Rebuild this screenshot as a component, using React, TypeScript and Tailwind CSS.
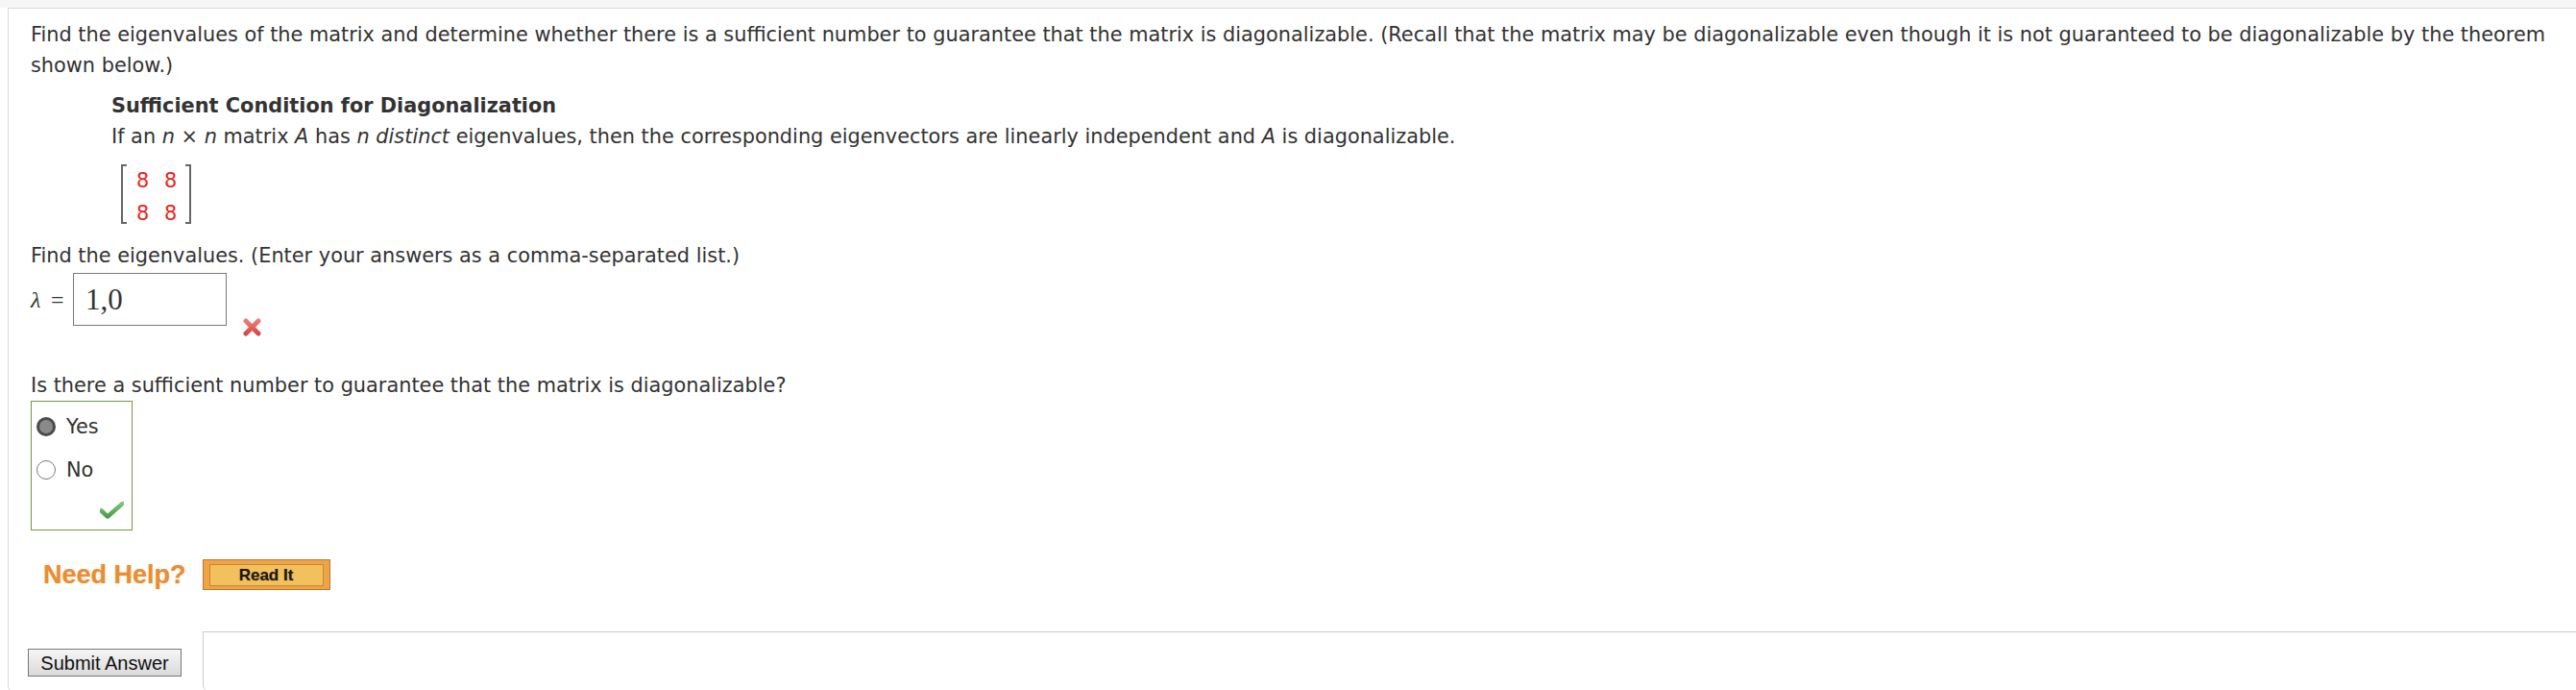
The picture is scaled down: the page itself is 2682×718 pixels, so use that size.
import React from "react";

function RedX() {
  return (
    <svg width="21" height="21" viewBox="0 0 21 21">
      <defs>
        <linearGradient id="rx" x1="0" y1="0" x2="0" y2="1">
          <stop offset="0" stopColor="#f07a7a" />
          <stop offset="1" stopColor="#d84848" />
        </linearGradient>
      </defs>
      <path d="M4 4 L17 17 M17 4 L4 17" stroke="url(#rx)" strokeWidth="5" strokeLinecap="round" fill="none" />
    </svg>
  );
}

function Check() {
  return (
    <svg width="25" height="18" viewBox="0 0 25 18">
      <defs>
        <linearGradient id="gc" x1="0" y1="0" x2="0" y2="1">
          <stop offset="0" stopColor="#7cc77c" />
          <stop offset="1" stopColor="#4a9e4a" />
        </linearGradient>
      </defs>
      <path d="M1.5 9.5 L8 15.5 L23.5 2" stroke="url(#gc)" strokeWidth="4.5" strokeLinecap="round" strokeLinejoin="round" fill="none" />
    </svg>
  );
}

export default function App() {
  return (
    <div className="h-[718px] overflow-hidden bg-white text-[#333] font-['DejaVu_Sans',Verdana,sans-serif] text-[20.85px] leading-[32px]">
      <div className="h-[8px] bg-[#f6f6f6]" />
      <div className="ml-[8px] h-[712px] border-l border-t border-b border-[#dcdcdc] rounded-bl-[6px] pl-[23px] pt-[11px]">
        <p className="whitespace-nowrap">
          Find the eigenvalues of the matrix and determine whether there is a sufficient number to guarantee that the matrix is diagonalizable. (Recall that the matrix may be diagonalizable even though it is not guaranteed to be diagonalizable by the theorem
          <br />
          shown below.)
        </p>
        <div className="ml-[84px] mt-[10px]">
          <div className="font-bold">Sufficient Condition for Diagonalization</div>
          <div>
            If an <i>n</i> × <i>n</i> matrix <i>A</i> has <i>n</i> <i>distinct</i> eigenvalues, then the corresponding eigenvectors are linearly independent and <i>A</i> is diagonalizable.
          </div>
          <div className="mt-[13px] ml-[10px] flex h-[62px]">
            <div className="w-[6px] h-[62px] border-l-2 border-t-2 border-b-2 border-[#666]" />
            <div className="grid grid-cols-[13px_13px] gap-x-[16px] pl-[10px] pr-[9px] leading-[34px] text-[#e8251c]">
              <span>8</span>
              <span>8</span>
              <span>8</span>
              <span>8</span>
            </div>
            <div className="w-[6px] h-[62px] border-r-2 border-t-2 border-b-2 border-[#666]" />
          </div>
        </div>
        <div className="mt-[17px]">Find the eigenvalues. (Enter your answers as a comma-separated list.)</div>
        <div className="mt-[2px] flex items-start">
          <div className="flex items-center h-[55px] font-['Liberation_Serif',serif] text-[24px]">
            <span className="italic w-[21px]">λ</span>
            <span className="w-[23px]">=</span>
          </div>
          <div className="w-[160px] h-[55px] border border-[#7a7a7a] flex items-center pl-[12px] font-['Liberation_Serif',serif] text-[31px] leading-none">
            1,0
          </div>
          <div className="ml-[16px] mt-[46px]">
            <RedX />
          </div>
        </div>
        <div className="mt-[34px]">Is there a sufficient number to guarantee that the matrix is diagonalizable?</div>
        <div className="w-[106px] h-[135px] border border-[#6a9e3c] pt-[8px] relative">
          <label className="flex items-center h-[36px] pl-[5px]">
            <span className="w-[20px] h-[20px] rounded-full border-[3px] border-[#4a4a4a] bg-[#8a8a8a]" />
            <span className="ml-[11px]">Yes</span>
          </label>
          <label className="flex items-center h-[36px] mt-[9px] pl-[5px]">
            <span className="w-[20px] h-[20px] rounded-full border-[1.5px] border-[#7a7a7a] bg-white" />
            <span className="ml-[11px]">No</span>
          </label>
          <div className="absolute left-[71px] top-[104px]">
            <Check />
          </div>
        </div>
        <div className="mt-[30px] flex items-start">
          <span className="ml-[13px] font-['Liberation_Sans',Arial,sans-serif] font-bold text-[27px] leading-[32px] text-[#ea8d33] [text-shadow:0_0_1px_rgba(233,138,44,0.6)]">
            Need Help?
          </span>
          <div className="ml-[17px] w-[133px] h-[32px] border border-[#b7792f] bg-[#eea444] p-[4px_6px_3px_6px]">
            <div className="h-full border border-[#c8863a] bg-[#f2c05c] flex items-center justify-center font-['Liberation_Sans',Arial,sans-serif] font-bold text-[17px] leading-none text-[#1a1a1a] [text-shadow:0_0_1px_rgba(0,0,0,0.4)]">
              Read It
            </div>
          </div>
        </div>
        <div className="mt-[43px] flex items-start">
          <button className="-ml-[3px] mt-[18px] w-[160px] h-[29px] border border-[#777] bg-gradient-to-b from-[#f6f6f6] to-[#dadada] font-['Liberation_Sans',Arial,sans-serif] text-[20px] leading-none text-[#111]">
            Submit Answer
          </button>
          <div className="ml-[22px] flex-1 h-[62px] border-l border-t border-[#cccccc] rounded-bl-[6px]" />
        </div>
      </div>
    </div>
  );
}
